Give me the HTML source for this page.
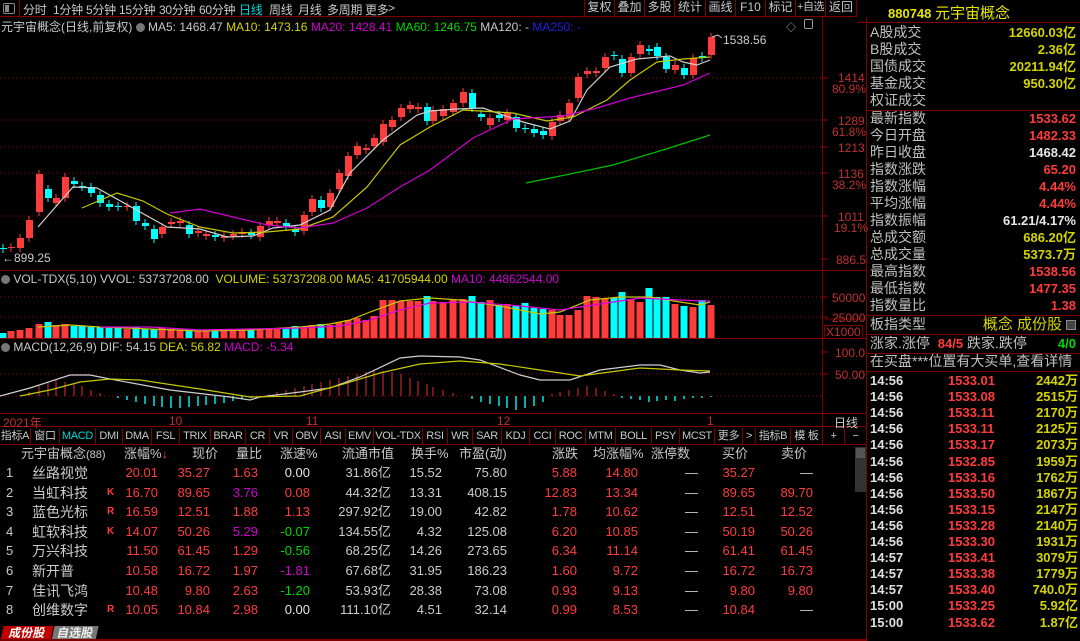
<!DOCTYPE html>
<html><head><meta charset="utf-8">
<style>
*{margin:0;padding:0;box-sizing:border-box}
body{width:1080px;height:641px;background:#000;overflow:hidden;position:relative;font-family:"Liberation Sans","Noto Sans CJK SC",sans-serif;color:#c8c8c8}
.a{position:absolute;white-space:nowrap}
.t{font-size:12px}
.r{color:#ff3c3c}.y{color:#d4d400}.w{color:#e6e6e6}.g{color:#00d800}.m{color:#d000d0}.c{color:#00d8d8}
.ln{position:absolute;background:#800000}
.btn{position:absolute;top:0;height:16px;font-size:12px;line-height:15px;text-align:center;color:#c8c8c8;white-space:nowrap;overflow:hidden}
.mn{position:absolute;top:1px;font-size:12px;color:#c8c8c8;white-space:nowrap;letter-spacing:-0.3px}
.rp{position:absolute;left:870px;width:206px;height:17px;font-size:14px;line-height:17px;color:#c0c0c0;white-space:nowrap}
.rp b{position:absolute;right:0;font-weight:bold;font-size:13px}
.tk{position:absolute;left:870px;width:208px;height:16px;font-size:13px;line-height:16px;font-weight:bold}
.tab{position:absolute;top:428px;height:16px;font-size:11px;line-height:16px;text-align:center;border-right:1px solid #800000;color:#c8c8c8;white-space:nowrap;overflow:hidden;letter-spacing:-0.3px}
.row{position:absolute;left:0;width:855px;height:20px;font-size:13px;line-height:20px}
.row span{position:absolute;text-align:right}
</style></head><body>
<div class="a" style="left:3px;top:3px;width:12px;height:11px;border:1px solid #888;border-radius:2px"></div>
<div class="a" style="left:5px;top:5px;width:4px;height:7px;background:#888"></div>
<div class="ln" style="left:19px;top:0;width:1px;height:17px"></div>
<div class="mn" style="left:23px">分时</div>
<div class="mn" style="left:53px">1分钟</div>
<div class="mn" style="left:86px">5分钟</div>
<div class="mn" style="left:119px">15分钟</div>
<div class="mn" style="left:159px">30分钟</div>
<div class="mn" style="left:199px">60分钟</div>
<div class="mn c" style="left:239px;color:#00d8d8">日线</div>
<div class="mn" style="left:269px">周线</div>
<div class="mn" style="left:298px">月线</div>
<div class="mn" style="left:327px">多周期</div>
<div class="mn" style="left:365px">更多</div>
<div class="mn" style="left:388px">&gt;</div>
<div class="ln" style="left:0;top:16px;width:857px;height:1px"></div>
<div class="btn" style="left:584px;width:30px;border-left:1px solid #800000">复权</div>
<div class="btn" style="left:614px;width:30px;border-left:1px solid #800000">叠加</div>
<div class="btn" style="left:644px;width:30px;border-left:1px solid #800000">多股</div>
<div class="btn" style="left:674px;width:31px;border-left:1px solid #800000">统计</div>
<div class="btn" style="left:705px;width:30px;border-left:1px solid #800000">画线</div>
<div class="btn" style="left:735px;width:30px;border-left:1px solid #800000">F10</div>
<div class="btn" style="left:765px;width:30px;border-left:1px solid #800000">标记</div>
<div class="btn" style="left:795px;width:30px;border-left:1px solid #800000;font-size:11px;letter-spacing:-0.5px">+自选</div>
<div class="btn" style="left:825px;width:32px;border-left:1px solid #800000;border-right:1px solid #800000">返回</div>
<div class="a" style="left:888px;top:2px;font-size:13px;font-weight:bold;color:#e6e600">880748 <span style="font-weight:normal;font-size:15px">元宇宙概念</span></div>
<div class="ln" style="left:857px;top:22px;width:223px;height:1px"></div>
<div class="a t" style="left:1px;top:18px;color:#c8c8c8">元宇宙概念(日线,前复权) <span style="display:inline-block;width:9px;height:9px;border-radius:50%;background:#777;vertical-align:-1px"></span> MA5: 1468.47 <span class="y">MA10: 1473.16</span> <span class="m">MA20: 1428.41</span> <span class="g">MA60: 1246.75</span> MA120: - <span style="color:#2020e0">MA250: -</span></div>
<div class="a" style="left:786px;top:19px;color:#bbb;font-size:10px">◇</div>
<div class="a" style="left:804px;top:19px;width:9px;height:10px;border:1px solid #999;border-radius:2px"></div>
<div class="ln" style="left:822px;top:17px;width:1px;height:410px"></div>
<div class="ln" style="left:866px;top:17px;width:1px;height:624px"></div>
<div class="ln" style="left:0;top:270px;width:866px;height:1px"></div>
<div class="ln" style="left:0;top:338px;width:866px;height:1px"></div>
<div class="ln" style="left:0;top:413px;width:866px;height:1px"></div>
<div class="ln" style="left:0;top:426px;width:866px;height:1px"></div>
<div class="ln" style="left:0;top:444px;width:866px;height:1px"></div>
<svg class="a" style="left:0;top:0" width="866" height="430" id="ch"></svg>
<div class="a t" style="left:838px;top:71px;color:#c03030">1414</div>
<div class="a t" style="left:832px;top:82px;color:#c03030">80.9%</div>
<div class="a t" style="left:838px;top:114px;color:#c03030">1289</div>
<div class="a t" style="left:832px;top:125px;color:#c03030">61.8%</div>
<div class="a t" style="left:838px;top:141px;color:#c03030">1213</div>
<div class="a t" style="left:838px;top:167px;color:#c03030">1136</div>
<div class="a t" style="left:832px;top:178px;color:#c03030">38.2%</div>
<div class="a t" style="left:838px;top:210px;color:#c03030">1011</div>
<div class="a t" style="left:834px;top:221px;color:#c03030">19.1%</div>
<div class="a t" style="left:836px;top:253px;color:#c03030">886.5</div>
<div class="a t" style="left:2px;top:251px;color:#ccc">←899.25</div>
<div class="a t" style="left:723px;top:33px;color:#ccc">1538.56</div>
<div class="a t" style="left:832px;top:291px;color:#c03030">50000</div>
<div class="a t" style="left:832px;top:311px;color:#c03030">25000</div>
<div class="a t" style="left:824px;top:325px;color:#c03030;border:1px solid #800000;padding:0 1px;line-height:12px">X1000</div>
<div class="a t" style="left:835px;top:346px;color:#c03030">100.0</div>
<div class="a t" style="left:835px;top:368px;color:#c03030">50.00</div>
<div class="a t" style="left:1px;top:272px"><span style="display:inline-block;width:9px;height:9px;border-radius:50%;background:#777;vertical-align:-1px"></span> VOL-TDX(5,10) VVOL: 53737208.00 &nbsp;<span class="y">VOLUME: 53737208.00 MA5: 41705944.00</span> <span class="m">MA10: 44862544.00</span></div>
<div class="a t" style="left:1px;top:340px"><span style="display:inline-block;width:9px;height:9px;border-radius:50%;background:#777;vertical-align:-1px"></span> MACD(12,26,9) DIF: 54.15 <span class="y">DEA: 56.82</span> <span class="m">MACD: -5.34</span></div>
<div class="a t" style="left:3px;top:414px;color:#c03030">2021年</div>
<div class="a t" style="left:169px;top:414px;color:#c03030">10</div>
<div class="a t" style="left:306px;top:414px;color:#c03030">11</div>
<div class="a t" style="left:497px;top:414px;color:#c03030">12</div>
<div class="a t" style="left:707px;top:414px;color:#c03030">1</div>
<div class="a" style="left:834px;top:414px;font-size:12px;color:#ccc">日线</div>
<div class="tab" style="left:0;width:31px">指标A</div>
<div class="tab" style="left:31px;width:29px">窗口</div>
<div class="tab c" style="left:60px;width:36px;color:#00d8d8">MACD</div>
<div class="tab" style="left:96px;width:27px">DMI</div>
<div class="tab" style="left:123px;width:29px">DMA</div>
<div class="tab" style="left:152px;width:28px">FSL</div>
<div class="tab" style="left:180px;width:31px">TRIX</div>
<div class="tab" style="left:211px;width:35px">BRAR</div>
<div class="tab" style="left:246px;width:24px">CR</div>
<div class="tab" style="left:270px;width:23px">VR</div>
<div class="tab" style="left:293px;width:28px">OBV</div>
<div class="tab" style="left:321px;width:25px">ASI</div>
<div class="tab" style="left:346px;width:28px">EMV</div>
<div class="tab" style="left:374px;width:49px">VOL-TDX</div>
<div class="tab" style="left:423px;width:25px">RSI</div>
<div class="tab" style="left:448px;width:25px">WR</div>
<div class="tab" style="left:473px;width:29px">SAR</div>
<div class="tab" style="left:502px;width:28px">KDJ</div>
<div class="tab" style="left:530px;width:26px">CCI</div>
<div class="tab" style="left:556px;width:30px">ROC</div>
<div class="tab" style="left:586px;width:30px">MTM</div>
<div class="tab" style="left:616px;width:36px">BOLL</div>
<div class="tab" style="left:652px;width:28px">PSY</div>
<div class="tab" style="left:680px;width:35px">MCST</div>
<div class="tab" style="left:715px;width:28px">更多</div>
<div class="tab" style="left:743px;width:13px">&gt;</div>
<div class="tab" style="left:756px;width:35px">指标B</div>
<div class="tab" style="left:791px;width:32px">模 板</div>
<div class="tab" style="left:823px;width:22px">+</div>
<div class="tab" style="left:845px;width:21px;border:none">−</div>
<div class="a" style="left:0;top:444px;width:855px;height:20px;font-size:13px;line-height:20px;color:#c8c8c8">
<span class="a" style="left:21px">元宇宙概念<span style="font-size:11px">(88)</span></span>
<span class="a" style="left:124px">涨幅%<span class="r">↓</span></span>
<span class="a" style="left:192px">现价</span>
<span class="a" style="left:236px">量比</span>
<span class="a" style="left:280px">涨速%</span>
<span class="a" style="left:342px">流通市值</span>
<span class="a" style="left:411px">换手%</span>
<span class="a" style="left:459px">市盈(动)</span>
<span class="a" style="left:552px">涨跌</span>
<span class="a" style="left:593px">均涨幅%</span>
<span class="a" style="left:651px">涨停数</span>
<span class="a" style="left:722px">买价</span>
<span class="a" style="left:781px">卖价</span>
</div>
<div class="a" style="left:855px;top:447px;width:11px;height:45px;background:#333"></div>
<div class="a" style="left:856px;top:448px;width:9px;height:10px;background:#555"></div>
<div id="tbl"></div>
<div class="a" style="left:2px;top:626px;width:50px;height:15px;background:#c00000;color:#fff;font-size:12px;font-weight:bold;line-height:15px;text-align:center;transform:skewX(-12deg)">成份股</div>
<div class="a" style="left:53px;top:626px;width:44px;height:15px;background:#777;color:#eee;font-size:12px;font-weight:bold;line-height:15px;text-align:center;transform:skewX(-12deg)">自选股</div>
<div class="ln" style="left:0;top:639px;width:866px;height:2px"></div>
<div id="rp"></div>
<script>
var ch=document.getElementById('ch'),h='';
function dl(y,x2){h+='<line x1="0" x2="'+(x2||822)+'" y1="'+y+'" y2="'+y+'" stroke="#900" stroke-dasharray="1,3"/>';}
[78,120,147,173,216].forEach(function(y){dl(y)});dl(297);dl(317);dl(374);dl(396);
[78,120,147,173,216,259,297,317,352,374].forEach(function(y){h+='<line x1="822" x2="828" y1="'+y+'" y2="'+y+'" stroke="#900"/>'});
h+='<line x1="825" x2="866" y1="319" y2="319" stroke="#800000"/>';
var C=[[3,'c',248,249],[11,'r',247,248],[20,'r',238,248],[29,'r',220,238],[39,'r',174,212],[48,'c',189,198],[56,'r',198,203],[65,'r',177,198],[74,'c',181,184],[82,'c',186,187],[91,'c',187,193],[100,'c',195,203],[109,'c',204,207],[118,'c',206,207],[127,'r',206,207],[136,'c',206,221],[145,'c',223,226],[154,'c',229,239],[162,'r',227,234],[171,'r',222,224],[180,'r',221,223],[189,'c',225,234],[198,'r',231,233],[206,'r',234,236],[215,'c',235,237],[224,'r',236,238],[233,'r',234,236],[242,'r',232,234],[251,'c',233,235],[260,'r',226,237],[269,'r',221,225],[277,'r',221,223],[286,'c',223,227],[295,'c',229,232],[304,'r',215,231],[312,'r',199,212],[321,'c',200,208],[330,'r',193,207],[339,'r',173,189],[348,'r',156,176],[357,'r',146,155],[366,'r',148,150],[374,'r',138,146],[383,'r',124,142],[392,'r',120,127],[401,'r',108,117],[410,'r',105,109],[418,'r',107,109],[427,'c',107,121],[433,'r',110,121],[443,'r',109,116],[453,'r',103,112],[463,'r',92,103],[472,'c',93,108],[481,'c',114,117],[490,'r',118,125],[499,'c',115,118],[507,'r',113,120],[516,'c',117,128],[525,'c',128,129],[534,'c',129,133],[543,'c',131,135],[552,'r',122,136],[560,'r',115,121],[569,'r',103,117],[578,'r',77,98],[587,'r',71,74],[596,'r',71,73],[605,'r',57,68],[614,'c',55,56],[622,'c',59,73],[631,'r',57,73],[640,'r',45,54],[649,'c',49,51],[657,'c',47,56],[666,'c',57,69],[675,'r',65,70],[684,'c',68,75],[693,'r',58,75],[702,'c',56,58],[711,'r',37,55]];
var V=[333,331,330,328,324,322,325,324,326,326,327,327,328,328,329,327,329,329,328,329,330,329,330,330,330,330,330,330,330,329,328,329,328,326,327,325,324,325,322,320,318,320,316,300,300,301,301,301,296,301,302,299,299,296,302,300,305,304,306,303,308,309,310,315,315,310,296,297,298,298,292,299,302,288,297,297,304,306,307,300,305,293];
var M=[0,0,-1,-4,-10,-14,-16,-14,-12,-10,-6,-3,0,2,4,6,8,10,11,12,12,11,10,9,8,7,5,3,2,1,-2,-4,-6,-8,-10,-12,-14,-16,-18,-20,-22,-24,-25,-25,-24,-22,-18,-15,-12,-9,-6,-3,0,3,6,8,10,12,14,12,10,6,-2,-4,-6,-8,-10,-8,-5,-2,2,3,4,6,5,4,5,3,2,2,1,1];
C.forEach(function(c,i){var x=c[0],col=c[1]=='r'?'#ff3c3c':'#00ffff',t=c[2],b=c[3];
 if(b-t<2){b=t+1;}
 h+='<line x1="'+x+'" x2="'+x+'" y1="'+(t-4)+'" y2="'+(b+4)+'" stroke="'+col+'"/>';
 h+='<rect x="'+(x-3)+'" y="'+t+'" width="7" height="'+(b-t)+'" fill="'+col+'"/>';
 var v=V[i]||320;h+='<rect x="'+(x-3.5)+'" y="'+v+'" width="7" height="'+(338-v)+'" fill="'+col+'"/>';
 var m=M[i]||0;if(m)h+='<line x1="'+x+'" x2="'+x+'" y1="396" y2="'+(396+m)+'" stroke="'+(m<0?'#e03030':'#00b0b0')+'" stroke-width="'+(m<0?1:2)+'"/>';
});
function pl(p,c){h+='<polyline fill="none" stroke="'+c+'" stroke-width="1.2" points="'+p+'"/>';}
pl('38,227 73,187 97,188 133,208 167,227 200,229 227,237 253,236 273,228 300,225 330,210 350,173 383,140 417,115 430,111 457,109 483,108 523,122 550,129 570,121 587,90 610,67 637,59 670,56 683,62 697,65 710,60','#d0d0d0');
pl('82,208 117,193 143,201 167,214 200,227 233,233 267,232 300,229 333,217 367,187 400,145 430,127 463,110 513,113 547,121 573,117 607,100 630,80 657,62 683,59 710,57','#c8c800');
pl('170,213 200,209 233,217 267,225 300,228 333,223 367,208 400,187 430,170 453,153 473,138 513,119 563,116 597,108 630,98 663,90 683,85 710,73','#d000d0');
pl('526,183 570,174 613,165 663,150 710,135','#00c000');
pl('38,327 70,325 100,327 150,329 200,331 250,330 300,327 330,324 350,320 370,312 400,301 430,298 460,300 500,306 540,314 560,312 590,300 620,297 650,297 680,302 700,305 710,302','#c8c800');
pl('100,327 150,327 200,330 250,329 300,328 340,326 370,320 400,310 430,303 470,302 520,306 560,310 600,304 640,298 680,300 700,301 710,301','#e000e0');
pl('0,396 30,388 70,375 90,375 110,379 170,390 230,397 250,400 260,397 300,392 330,388 360,377 400,358 420,356 460,357 480,360 520,375 540,380 570,380 600,370 640,365 660,365 680,370 700,373 710,372','#d0d0d0');
pl('20,396 50,390 80,382 110,379 140,380 200,389 250,397 300,396 340,385 380,373 420,364 460,361 500,364 540,370 580,376 640,368 680,370 710,371','#c8c800');
h+='<path d="M712 37 L718 35 L722 38" stroke="#ccc" fill="none"/>';
ch.innerHTML=h;
var R=[['1','丝路视觉','','20.01','35.27','1.63','0.00','31.86亿','15.52','75.80','5.88','14.80','35.27','—'],
['2','当虹科技','K','16.70','89.65','3.76','0.08','44.32亿','13.31','408.15','12.83','13.34','89.65','89.70'],
['3','蓝色光标','R','16.59','12.51','1.88','1.13','297.92亿','19.00','42.82','1.78','10.62','12.51','12.52'],
['4','虹软科技','K','14.07','50.26','5.29','-0.07','134.55亿','4.32','125.08','6.20','10.85','50.19','50.26'],
['5','万兴科技','','11.50','61.45','1.29','-0.56','68.25亿','14.26','273.65','6.34','11.14','61.41','61.45'],
['6','新开普','','10.58','16.72','1.97','-1.81','67.68亿','31.95','186.23','1.60','9.72','16.72','16.73'],
['7','佳讯飞鸿','','10.48','9.80','2.63','-1.20','53.93亿','28.38','73.08','0.93','9.13','9.80','9.80'],
['8','创维数字','R','10.05','10.84','2.98','0.00','111.10亿','4.51','32.14','0.99','8.53','10.84','—']];
var spd=['w','r','r','g','g','m','g','w'],lb=['r','m','r','m','r','r','r','r'];
var t='';R.forEach(function(r,i){var y=463+i*19.6;
 t+='<div class="row" style="top:'+y+'px"><span style="left:6px;color:#ccc">'+r[0]+'</span><span style="left:32px;color:#ccc;font-size:14px">'+r[1]+'</span><span class="r" style="left:107px;font-size:10px;font-weight:bold">'+r[2]+'</span>'+
 '<span class="r" style="right:697px">'+r[3]+'</span><span class="r" style="right:645px">'+r[4]+'</span><span class="'+lb[i]+'" style="right:597px">'+r[5]+'</span><span class="'+spd[i]+'" style="right:545px">'+r[6]+'</span>'+
 '<span style="right:464px;color:#ccc">'+r[7]+'</span><span style="right:413px;color:#ccc">'+r[8]+'</span><span style="right:348px;color:#ccc">'+r[9]+'</span>'+
 '<span class="r" style="right:278px">'+r[10]+'</span><span class="r" style="right:217px">'+r[11]+'</span><span style="left:685px;color:#ccc">—</span>'+
 '<span class="r" style="right:100px">'+r[12]+'</span><span class="'+(r[13]=='—'?'':'r')+'" style="right:42px;color:'+(r[13]=='—'?'#ccc':'')+'">'+r[13]+'</span></div>';});
document.getElementById('tbl').innerHTML=t;
var P=[['A股成交','12660.03亿','y'],['B股成交','2.36亿','y'],['国债成交','20211.94亿','y'],['基金成交','950.30亿','y'],['权证成交','',''],
['最新指数','1533.62','r'],['今日开盘','1482.33','r'],['昨日收盘','1468.42','w'],['指数涨跌','65.20','r'],['指数涨幅','4.44%','r'],['平均涨幅','4.44%','r'],['指数振幅','61.21/4.17%','w'],['总成交额','686.20亿','y'],['总成交量','5373.7万','y'],['最高指数','1538.56','r'],['最低指数','1477.35','r'],['指数量比','1.38','r']];
var p='';P.forEach(function(r,i){var y=24+i*17+(i>=5?1:0);p+='<div class="rp" style="top:'+y+'px">'+r[0]+'<b class="'+r[2]+'">'+r[1]+'</b></div>';});
p+='<div class="ln" style="left:866px;top:110px;width:214px;height:1px"></div>';
p+='<div class="ln" style="left:866px;top:315px;width:214px;height:1px"></div>';
p+='<div class="rp" style="top:316px">板指类型<b class="y" style="font-weight:normal;font-size:15px;right:14px">概念 成份股</b><span style="position:absolute;right:0;top:4px;width:10px;height:10px;border:1px solid #888;background:#444"></span></div>';
p+='<div class="ln" style="left:866px;top:334px;width:214px;height:1px"></div>';
p+='<div class="rp" style="top:335px">涨家.涨停 <span class="r" style="font-weight:bold;font-size:13px;margin-left:4px">84/5</span> 跌家.跌停<b class="g">4/0</b></div>';
p+='<div class="ln" style="left:866px;top:353px;width:214px;height:1px"></div>';
p+='<div class="rp" style="top:353px;font-size:14px">在买盘***位置有大买单,查看详情</div>';
p+='<div class="ln" style="left:866px;top:371px;width:214px;height:1px"></div>';
var T=[['14:56','1533.01','2442万'],['14:56','1533.08','2515万'],['14:56','1533.11','2170万'],['14:56','1533.11','2125万'],['14:56','1533.17','2073万'],['14:56','1532.85','1959万'],['14:56','1533.16','1762万'],['14:56','1533.50','1867万'],['14:56','1533.15','2147万'],['14:56','1533.28','2140万'],['14:56','1533.30','1931万'],['14:57','1533.41','3079万'],['14:57','1533.38','1779万'],['14:57','1533.40','740.0万'],['15:00','1533.25','5.92亿'],['15:00','1533.62','1.87亿']];
T.forEach(function(r,i){var y=373+i*16.1;p+='<div class="tk" style="top:'+y+'px"><span style="color:#e0e0e0">'+r[0]+'</span><span class="r" style="position:absolute;left:78px">'+r[1]+'</span><span class="y" style="position:absolute;right:0">'+r[2]+'</span></div>';});
document.getElementById('rp').innerHTML=p;
</script>
</body></html>
